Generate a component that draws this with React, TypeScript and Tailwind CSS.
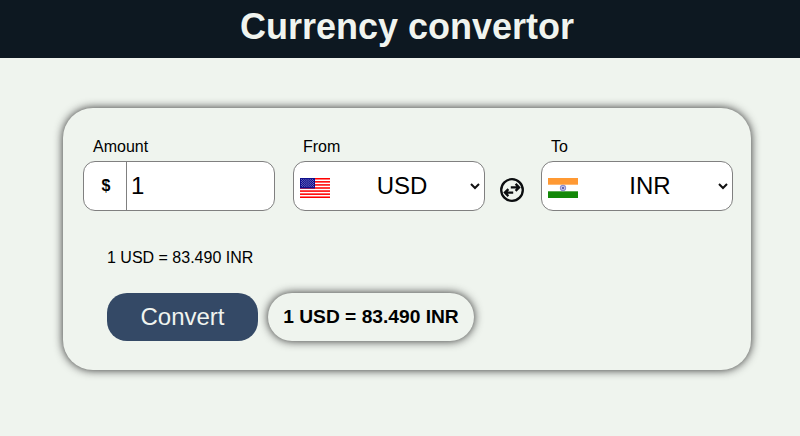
import type { ReactNode } from "react";

function UsFlag() {
  return (
    <svg width="30" height="20" viewBox="0 0 30 20" className="shrink-0">
      <rect width="30" height="20" fill="#fff" />
      {[0, 1, 2, 3, 4, 5, 6].map((i) => (
        <rect key={i} y={(i * 40) / 13} width="30" height={20 / 13} fill="#ff0000" />
      ))}
      <rect width="15" height="10.5" fill="#10108c" />
      {[0, 1, 2, 3, 4, 5, 6, 7].map((r) =>
        [0, 1, 2, 3, 4, 5].map((c) => (
          <rect key={`${r}-${c}`} x={1 + c * 2.2 + (r % 2)} y={1 + r} width="1" height="1" fill="#6464bc" />
        )),
      )}
    </svg>
  );
}

function IndiaFlag() {
  return (
    <svg width="30" height="20" viewBox="0 0 30 20" className="shrink-0">
      <rect width="30" height="20" fill="#fff" />
      <rect width="30" height="6.7" fill="#ff9933" />
      <rect y="13.3" width="30" height="6.7" fill="#138808" />
      <circle cx="15" cy="10" r="2.6" fill="#c9c9ea" stroke="#8f8fd0" strokeWidth="1.1" />
      <circle cx="15" cy="10" r="1" fill="#4040a0" />
    </svg>
  );
}

function SwapIcon() {
  return (
    <svg width="24" height="24" viewBox="0 0 24 24" fill="none" stroke="#0b0d0f" strokeWidth="2.3">
      <circle cx="12" cy="12" r="10.8" />
      <path d="M10.8 9.4h8M15.6 5.9l3.5 3.5-3.5 3.5M13.2 14.6h-8M8.4 11.1l-3.5 3.5 3.5 3.5" />
    </svg>
  );
}

function Field({ label, children }: { label: string; children: ReactNode }) {
  return (
    <div className="w-48">
      <div className="mb-1 ml-2.5 h-[21px] text-base leading-[21px]">{label}</div>
      <div className="flex h-[50px] items-center overflow-hidden rounded-xl border border-[#808080] bg-white">
        {children}
      </div>
    </div>
  );
}

function Currency({ code, flag }: { code: string; flag: ReactNode }) {
  return (
    <>
      <div className="mt-1 ml-1.5">{flag}</div>
      <div className="flex-1 pl-1 text-center text-2xl">{code}</div>
      <svg width="10" height="7" viewBox="0 0 10 7" fill="none" stroke="#111" strokeWidth="2" className="mr-1">
        <path d="M1 1l4 4 4-4" />
      </svg>
    </>
  );
}

export default function App() {
  return (
    <div className="h-[436px] w-[800px] overflow-hidden bg-[#eff4ee] font-['Liberation_Sans',Arial,sans-serif] text-black">
      <header className="flex h-[58px] justify-center bg-[#0d1821] pl-3.5">
        <h1 className="mt-[5px] text-4xl leading-[44px] font-bold text-[#f0f4ef]">Currency convertor</h1>
      </header>
      <main className="mt-[50px] ml-[63px] h-[262px] w-[688px] rounded-[30px] pt-7 pl-5 shadow-[0_0_10px_#2c2c2c]">
        <div className="flex items-end">
          <Field label="Amount">
            <div className="flex h-full w-[43px] items-center justify-center border-r border-[#808080] pl-0.5 text-base font-bold">
              $
            </div>
            <div className="pl-1 text-2xl">1</div>
          </Field>
          <div className="ml-[18px]">
            <Field label="From">
              <Currency code="USD" flag={<UsFlag />} />
            </Field>
          </div>
          <div className="mr-[17px] mb-[9px] ml-[15px]">
            <SwapIcon />
          </div>
          <Field label="To">
            <Currency code="INR" flag={<IndiaFlag />} />
          </Field>
        </div>
        <div className="mt-[37px] ml-6 text-base leading-5">1 USD = 83.490 INR</div>
        <div className="mt-[25px] ml-6 flex gap-2.5">
          <button className="h-12 w-[151px] rounded-[20px] bg-[#344966] text-2xl text-[#f0f4ef]">Convert</button>
          <div className="flex h-12 w-[206px] items-center justify-center rounded-3xl pt-px text-[19.2px] font-bold shadow-[0_0_10px_#2c2c2c]">
            1 USD = 83.490 INR
          </div>
        </div>
      </main>
    </div>
  );
}
